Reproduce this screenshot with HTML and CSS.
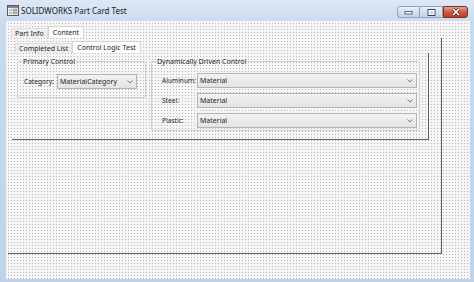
FILE: index.html
```html
<!DOCTYPE html>
<html lang="en">
<head>
    <meta charset="UTF-8">
    <title>SOLIDWORKS Part Card Test</title>
    <link rel="stylesheet" href="styles.css">
</head>
<body>
    <div class="window">
        <!-- Title bar -->
        <div class="titlebar">
            <svg class="app-icon" width="12" height="11" viewBox="0 0 12 11">
                <rect x="0.5" y="0.5" width="11" height="10" fill="#f4f4f4" stroke="#5b5b5b"/>
                <rect x="1" y="1" width="10" height="2" fill="#7d8a99"/>
                <rect x="2" y="4.5" width="3" height="1" fill="#8a8a8a"/>
                <rect x="6" y="4" width="4" height="2" fill="#b9c4d0" stroke="#7a7a7a" stroke-width="0.5"/>
                <rect x="2" y="7.5" width="3" height="1" fill="#8a8a8a"/>
                <rect x="6" y="7" width="4" height="2" fill="#b9c4d0" stroke="#7a7a7a" stroke-width="0.5"/>
            </svg>
            <span class="title">SOLIDWORKS Part Card Test</span>
            <div class="caption-buttons">
                <div class="cap-btn min">
                    <svg width="9" height="5" viewBox="0 0 9 5"><rect x="1" y="1.5" width="7" height="2.5" fill="#fff" stroke="#35465c" stroke-width="0.8"/></svg>
                </div>
                <div class="cap-btn max">
                    <svg width="9" height="7" viewBox="0 0 9 7"><rect x="1" y="0.5" width="7" height="6" fill="none" stroke="#35465c" stroke-width="1"/><rect x="2" y="1.5" width="5" height="4" fill="none" stroke="#fff" stroke-width="0.8"/></svg>
                </div>
                <div class="cap-btn close">
                    <svg width="10" height="8" viewBox="0 0 10 8"><path d="M2 1 L8 7 M8 1 L2 7" stroke="#5a1d16" stroke-width="3"/><path d="M2 1 L8 7 M8 1 L2 7" stroke="#fff" stroke-width="1.6"/></svg>
                </div>
            </div>
        </div>

        <!-- Form client area (designer grid) -->
        <div class="client">
            <div class="tabcontrol outer">
                <div class="tabstrip">
                    <div class="tab">Part Info</div>
                    <div class="tab active">Content</div>
                </div>
                <div class="page">
                    <div class="tabcontrol inner">
                        <div class="tabstrip">
                            <div class="tab">Completed List</div>
                            <div class="tab active">Control Logic Test</div>
                        </div>
                        <div class="page groups">
                            <fieldset class="group primary">
                                <legend>Primary Control</legend>
                                <div class="group-body">
                                    <div class="field-row">
                                        <span class="field-label">Category:</span>
                                        <div class="combo">MaterialCategory
                                            <svg class="chevron" width="6" height="4" viewBox="0 0 6 4"><path d="M0.5 0.5 L3 3 L5.5 0.5" fill="none" stroke="#6b6b6b" stroke-width="0.9"/></svg>
                                        </div>
                                    </div>
                                </div>
                            </fieldset>
                            <fieldset class="group dynamic">
                                <legend>Dynamically Driven Control</legend>
                                <div class="group-body">
                                    <div class="field-row">
                                        <span class="field-label">Aluminum:</span>
                                        <div class="combo">Material
                                            <svg class="chevron" width="6" height="4" viewBox="0 0 6 4"><path d="M0.5 0.5 L3 3 L5.5 0.5" fill="none" stroke="#6b6b6b" stroke-width="0.9"/></svg>
                                        </div>
                                    </div>
                                    <div class="field-row">
                                        <span class="field-label">Steel:</span>
                                        <div class="combo">Material
                                            <svg class="chevron" width="6" height="4" viewBox="0 0 6 4"><path d="M0.5 0.5 L3 3 L5.5 0.5" fill="none" stroke="#6b6b6b" stroke-width="0.9"/></svg>
                                        </div>
                                    </div>
                                    <div class="field-row">
                                        <span class="field-label">Plastic:</span>
                                        <div class="combo">Material
                                            <svg class="chevron" width="6" height="4" viewBox="0 0 6 4"><path d="M0.5 0.5 L3 3 L5.5 0.5" fill="none" stroke="#6b6b6b" stroke-width="0.9"/></svg>
                                        </div>
                                    </div>
                                </div>
                            </fieldset>
                        </div>
                    </div>
                </div>
            </div>
        </div>
    </div>
</body>
</html>
```

FILE: styles.css
```css
body {
    margin: 0;
    font-family: "Noto Sans", "Open Sans", sans-serif;
    color: #1e1e1e;
}

.window {
    width: 474px;
    height: 282px;
    display: flex;
    flex-direction: column;
    background: linear-gradient(#dde8f5, #c8daee 24px, #bed3eb);
}

/* Title bar */
.titlebar {
    height: 21px;
    flex-shrink: 0;
    display: flex;
    align-items: center;
}

.app-icon {
    margin-left: 7px;
}

.title {
    margin-left: 2px;
    font-size: 8px;
    color: #1b1b1b;
}

.caption-buttons {
    margin-left: auto;
    margin-right: 6px;
    align-self: flex-start;
    margin-top: 6px;
    display: flex;
}

.cap-btn {
    box-sizing: border-box;
    height: 12px;
    display: flex;
    align-items: center;
    justify-content: center;
    border: 1px solid #8ea3bd;
}

.cap-btn.min {
    width: 23px;
    border-radius: 3px 0 0 3px;
    background: linear-gradient(#e9f0f8, #d2deec 50%, #c4d4e7);
}

.cap-btn.max {
    width: 23px;
    border-left: none;
    background: linear-gradient(#e9f0f8, #d2deec 50%, #c4d4e7);
}

.cap-btn.close {
    width: 25px;
    border-color: #7c2d24;
    border-radius: 0 3px 3px 0;
    background: linear-gradient(#e5a08f, #cf5a48 50%, #c0392b);
}

/* Client area with designer grid dots */
.client {
    flex: 1;
    margin: 0 4px 3px 6px;
    padding: 5px 0 0 2px;
    background-color: #f5f5f5;
    background-image:
        linear-gradient(90deg, #f5f5f5 2px, transparent 2px),
        linear-gradient(#f5f5f5 2px, #b9b9b9 2px);
    background-size: 3px 3px;
}

/* Tab controls */
.tabcontrol {
    display: flex;
    flex-direction: column;
}

.tabcontrol.outer {
    width: 434px;
    height: 228px;
}

.tabcontrol.inner {
    width: 417px;
    height: 99px;
}

.tabstrip {
    height: 12px;
    flex-shrink: 0;
    display: flex;
    align-items: flex-end;
    padding-left: 3px;
}

.tab {
    box-sizing: border-box;
    height: 10px;
    padding: 0 3px;
    font-size: 7px;
    line-height: 9px;
    white-space: nowrap;
    background: #eeeeee;
    border: 1px solid #dedede;
    border-bottom: none;
}

.tab.active {
    height: 12px;
    padding: 1px 4px 0;
    background: #fcfcfc;
    border-color: #d4d4d4;
}

.page {
    flex: 1;
    border-right: 1px solid #5f5f5f;
    border-bottom: 1px solid #5f5f5f;
    padding: 3px 0 0 4px;
}

.page.groups {
    display: flex;
    align-items: flex-start;
    gap: 5px;
    padding: 4px 0 0 5px;
}

/* Group boxes */
.group {
    box-sizing: border-box;
    margin: 0;
    min-width: 0;
    padding: 0 0 0 4px;
    border: 1px solid #cdd1d6;
    border-radius: 2px;
}

.group legend {
    font-size: 7px;
    line-height: 9px;
    padding: 0 1px;
}

.group.primary {
    width: 129px;
    height: 41px;
}

.group.dynamic {
    width: 269px;
    height: 74px;
}

.primary .group-body {
    padding: 8px 0 0 2px;
}

.dynamic .group-body {
    padding: 7px 0 0 6px;
    display: flex;
    flex-direction: column;
    gap: 5px;
}

.field-row {
    display: flex;
    align-items: center;
    height: 15px;
}

.field-label {
    font-size: 6.6px;
    white-space: nowrap;
}

.primary .field-label {
    width: 33px;
}

.dynamic .field-label {
    width: 35px;
}

.combo {
    box-sizing: border-box;
    height: 15px;
    display: flex;
    align-items: center;
    padding-left: 2px;
    font-size: 7px;
    border: 1px solid #b4b4b4;
    background: linear-gradient(#f2f2f2, #e3e3e3);
}

.primary .combo {
    width: 80px;
}

.dynamic .combo {
    width: 220px;
}

.chevron {
    margin-left: auto;
    margin-right: 3px;
}
```
